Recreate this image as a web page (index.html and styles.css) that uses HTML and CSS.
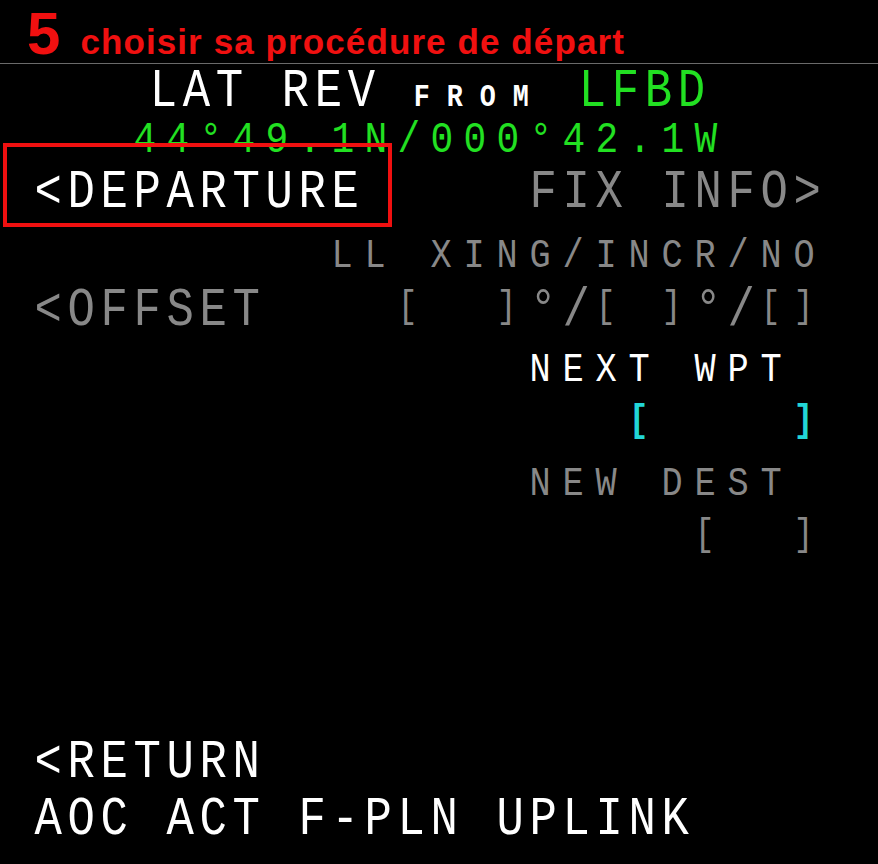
FILE: index.html
```html
<!DOCTYPE html>
<html lang="fr">
<head>
<meta charset="UTF-8">
<meta name="viewport" content="width=device-width, initial-scale=1.0">
<title>LAT REV - choix du départ</title>
<link rel="stylesheet" href="styles.css">
</head>
<body>

<div class="caption">
  <span class="step">5</span>
  <span class="caption-text">choisir sa procédure de départ</span>
</div>

<!-- MCDU page : 24 colonnes, 14 lignes -->
<div class="mcdu">
  <div class="row title">LAT REV <span class="sm">FROM</span> <span class="green">LFBD</span></div>
  <div class="row"><span class="coord green">   44°49.1N/000°42.1W</span></div>
  <div class="row">&lt;DEPARTURE     <span class="gray">FIX INFO&gt;</span></div>
  <div class="row"><span class="lbl gray">         LL XING/INCR/NO</span></div>
  <div class="row gray">&lt;OFFSET    <span class="br">[  ]</span>°/<span class="br">[ ]</span>°/<span class="br">[]</span></div>
  <div class="row"><span class="lbl">               NEXT WPT </span></div>
  <div class="row cyan"><span class="br">                  [    ]</span></div>
  <div class="row"><span class="lbl gray">               NEW DEST </span></div>
  <div class="row gray"><span class="br">                    [  ]</span></div>
  <div class="row"></div>
  <div class="row"></div>
  <div class="row"></div>
  <div class="row">&lt;RETURN</div>
  <div class="row">AOC ACT F-PLN UPLINK</div>
</div>

<div class="highlight"></div>

</body>
</html>
```

FILE: styles.css
```css
/* Page */
body {
  margin: 0;
  background-color: #000;
  color: #fff;
  font-family: "Liberation Mono", "DejaVu Sans Mono", monospace;
}

/* Red caption above the screen */
.caption {
  display: flex;
  align-items: baseline;
  height: 64px;
  box-sizing: border-box;
  padding: 4px 0 0 27px;
  border-bottom: 1px solid #6a6a6a;
  color: #f01010;
  font-family: "Liberation Sans", Arial, sans-serif;
  font-weight: bold;
}

.step {
  font-size: 60px;
  line-height: 1;
}

.caption-text {
  margin-left: 20px;
  font-size: 35px;
  line-height: 1;
  letter-spacing: 1.1px;
}

/* MCDU screen: 24 cells of 33px once squeezed by the scaleX below
   (38.37px before the transform) */
.mcdu {
  padding-left: 40px;
  transform: scaleX(0.86);
  transform-origin: 0 0;
}

.row {
  height: 57px;
  font-size: 53px;
  line-height: 57px;
  letter-spacing: 6.57px;
  white-space: pre;
}

.title {
  height: 44px;
  padding-left: 134px;
}

.sm {
  font-size: 31px;
  font-weight: bold;
  letter-spacing: 19.77px;
}

.coord {
  font-size: 44px;
  letter-spacing: 11.97px;
  vertical-align: -2px;
}

.lbl {
  font-size: 41px;
  letter-spacing: 13.77px;
  vertical-align: -3px;
}

/* brackets sit on the baseline, cap high */
.br {
  font-size: 39px;
  letter-spacing: 14.97px;
  vertical-align: 8px;
}

/* Colours */
.green {
  color: #22e022;
}

.gray {
  color: #888;
}

.cyan {
  color: #22d6d6;
  font-weight: bold;
}

/* Red frame round the DEPARTURE key */
.highlight {
  position: absolute;
  left: 3px;
  top: 143px;
  width: 389px;
  height: 84px;
  box-sizing: border-box;
  border: 4px solid #f01010;
}
```
